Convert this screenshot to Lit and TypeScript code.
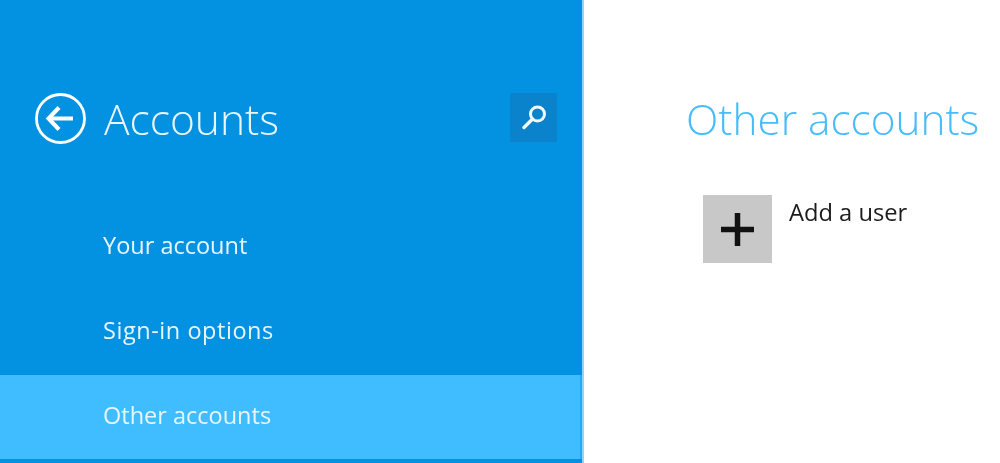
import { LitElement, html, css } from 'lit';
import { customElement } from 'lit/decorators.js';

const NAV = [
  { name: 'Your account', cls: '' },
  { name: 'Sign-in options', cls: 'wide' },
  { name: 'Other accounts', cls: 'on' },
];

@customElement('app-root')
export class AppRoot extends LitElement {
  static styles = css`
    :host {
      display: flex;
      width: 1000px;
      height: 463px;
      overflow: hidden;
      background: #fff;
      font-family: 'Open Sans', 'Liberation Sans', sans-serif;
    }
    .side {
      width: 582px;
      flex: none;
      background: #0392e2;
      border-right: 2px solid #8fd4ff;
      box-sizing: content-box;
      padding-top: 93px;
    }
    .head {
      display: flex;
      align-items: center;
      height: 51px;
      padding-left: 35px;
      padding-right: 25px;
    }
    .back {
      width: 51px;
      height: 51px;
      flex: none;
      margin-right: 18px;
    }
    h1 {
      margin: 0;
      flex: 1;
      font-size: 42.5px;
      font-weight: 300;
      line-height: 51px;
      color: #eaf6fd;
    }
    .search {
      width: 47px;
      height: 49px;
      margin-top: -2px;
      background: #0a83cc;
      display: flex;
      align-items: center;
      justify-content: center;
    }
    nav {
      margin-top: 60px;
    }
    .item {
      height: 85px;
      display: flex;
      align-items: center;
      padding-left: 103px;
      padding-bottom: 4px;
      box-sizing: border-box;
      font-size: 23.5px;
      color: #e8f5fd;
    }
    .item.wide {
      letter-spacing: 0.55px;
    }
    .item.on {
      height: 84px;
      margin-top: 1px;
      background: #40bdff;
      box-shadow: inset -2px 0 0 #2ba7ef;
    }
    .main {
      flex: 1;
      padding: 93px 0 0 102px;
      min-width: 0;
    }
    h2 {
      margin: 0;
      font-size: 42.3px;
      font-weight: 300;
      line-height: 51px;
      color: #45bdfd;
      white-space: nowrap;
    }
    .add {
      display: flex;
      align-items: flex-start;
      gap: 17px;
      margin: 51px 0 0 17px;
    }
    .tile {
      width: 69px;
      height: 68px;
      background: #c8c8c8;
      display: flex;
      align-items: center;
      justify-content: center;
    }
    .label {
      font-size: 23.7px;
      line-height: 34px;
      color: #1c1c1c;
    }
    .soft {
      filter: blur(0.5px);
    }
  `;

  render() {
    return html`
      <div class="side">
        <div class="head">
          <svg class="back soft" viewBox="0 0 51 51" fill="none" stroke="#fff">
            <circle cx="25.5" cy="25.5" r="24" stroke-width="2.8"></circle>
            <path d="M38 25.5H15" stroke-width="4"></path>
            <path d="M24 14.5 13.5 25.5 24 36.5" stroke-width="4"></path>
          </svg>
          <h1 class="soft">Accounts</h1>
          <div class="search">
            <svg class="soft" width="26" height="26" viewBox="0 0 26 26" fill="none" stroke="#f2f9fd">
              <circle cx="16.5" cy="9" r="7" stroke-width="3"></circle>
              <path d="M11.5 14 3 22.5" stroke-width="3.4" stroke-linecap="round"></path>
            </svg>
          </div>
        </div>
        <nav>
          ${NAV.map(
            (n) => html`<div class="item ${n.cls}"><span class="soft">${n.name}</span></div>`
          )}
        </nav>
      </div>
      <div class="main">
        <h2 class="soft">Other accounts</h2>
        <div class="add">
          <div class="tile">
            <svg class="soft" width="33" height="33" viewBox="0 0 33 33" stroke="#111" stroke-width="5.5">
              <path d="M0 16.5H33M16.5 0V33"></path>
            </svg>
          </div>
          <span class="label soft">Add a user</span>
        </div>
      </div>
    `;
  }
}
